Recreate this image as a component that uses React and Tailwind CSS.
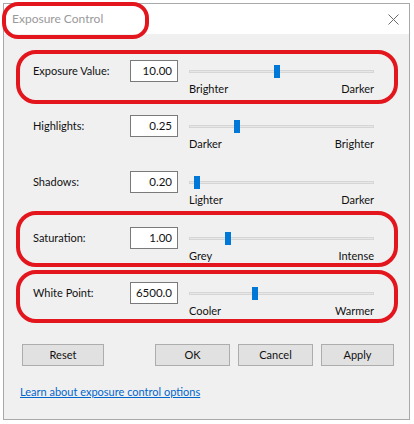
import React from 'react';

const rows = [
  { label: 'Exposure Value:', value: '10.00', left: 'Brighter', right: 'Darker', thumb: 85, h: 'h-[55px]' },
  { label: 'Highlights:', value: '0.25', left: 'Darker', right: 'Brighter', thumb: 45, h: 'h-[56px]' },
  { label: 'Shadows:', value: '0.20', left: 'Lighter', right: 'Darker', thumb: 5, h: 'h-[56px]' },
  { label: 'Saturation:', value: '1.00', left: 'Grey', right: 'Intense', thumb: 36, h: 'h-[55px]' },
  { label: 'White Point:', value: '6500.0', left: 'Cooler', right: 'Warmer', thumb: 63, h: 'h-[55px]' },
];

function Row({ r }) {
  return (
    <div className={`flex items-start pl-[29px] ${r.h}`}>
      <div className="w-[97px] h-[22px] flex items-center">{r.label}</div>
      <div className="w-[48px] h-[22px] bg-white border border-[#7a7a7a] flex items-center justify-end pr-[5px] text-[11.5px]">
        {r.value}
      </div>
      <div className="ml-[11px] w-[185px] flex flex-col">
        <div className="relative h-[22px]">
          <div className="absolute left-0 right-0 top-[10px] h-[3px] bg-[#e7e7e7] border border-[#d6d6d6]" />
          <div
            className="absolute top-[5px] w-[6px] h-[13px] bg-[#0078d7]"
            style={{ left: r.thumb }}
          />
        </div>
        <div className="flex justify-between leading-[16px] -mt-[1px]">
          <span>{r.left}</span>
          <span>{r.right}</span>
        </div>
      </div>
    </div>
  );
}

function Btn({ children, w }) {
  return (
    <div className={`${w} h-[22px] bg-[#e1e1e1] border border-[#adadad] flex items-center justify-center`}>
      {children}
    </div>
  );
}

export default function App() {
  return (
    <div className="relative w-[414px] h-[424px] bg-white overflow-hidden font-['Lato',sans-serif] text-[11px] text-[#111]">
      <div className="ml-[3px] mt-[3px] w-[407px] h-[417px] border border-[#a9a9a9] bg-[#f0f0f0] flex flex-col">
        <div className="h-[30px] bg-white flex items-center justify-between pl-[8px] pr-[10px]">
          <span className="text-[#9a9a9a] text-[12px]">Exposure Control</span>
          <svg width="11" height="11" viewBox="0 0 11 11">
            <line x1="0.5" y1="0.5" x2="10.5" y2="10.5" stroke="#6b6b6b" strokeWidth="1" />
            <line x1="10.5" y1="0.5" x2="0.5" y2="10.5" stroke="#6b6b6b" strokeWidth="1" />
          </svg>
        </div>
        <div className="pt-[26px] flex flex-col">
          {rows.map((r) => (
            <Row key={r.label} r={r} />
          ))}
        </div>
        <div className="mt-[7px] pl-[18px] flex items-center">
          <Btn w="w-[82px]">Reset</Btn>
          <div className="ml-[51px] flex gap-[8px]">
            <Btn w="w-[75px]">OK</Btn>
            <Btn w="w-[75px]">Cancel</Btn>
            <Btn w="w-[73px]">Apply</Btn>
          </div>
        </div>
        <div className="mt-[18px] pl-[16px] leading-[16px]">
          <span className="text-[#0066cc] underline">Learn about exposure control options</span>
        </div>
      </div>

      {/* red annotation outlines */}
      <div className="absolute left-[2px] top-[2px] w-[147px] h-[37px] border-[4px] border-[#e3161d] rounded-[16px]" />
      <div className="absolute left-[16px] top-[50px] w-[382px] h-[54px] border-[4px] border-[#e3161d] rounded-[20px]" />
      <div className="absolute left-[16px] top-[211px] w-[382px] h-[56px] border-[4px] border-[#e3161d] rounded-[20px]" />
      <div className="absolute left-[16px] top-[270px] w-[382px] h-[53px] border-[4px] border-[#e3161d] rounded-[20px]" />
    </div>
  );
}
